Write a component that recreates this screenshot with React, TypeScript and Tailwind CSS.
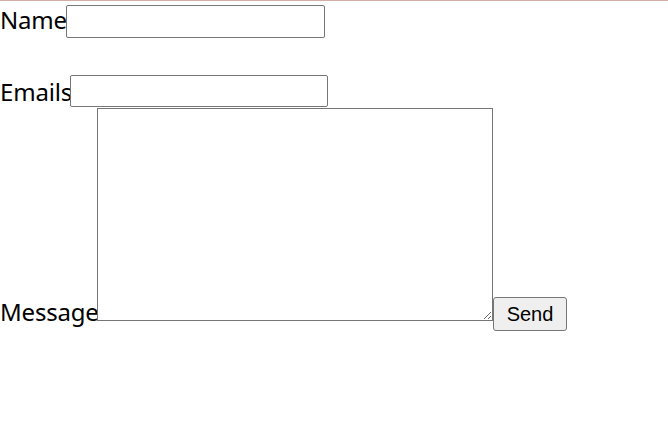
import React from "react";

export default function App() {
  return (
    <div className="w-[668px] h-[424px] bg-white border-t border-[#d2aea4] text-black font-['Noto_Sans','Open_Sans',sans-serif] text-[24px]">
      <form onSubmit={(e) => e.preventDefault()}>
        <div className="flex items-start h-[38px]">
          <label className="w-[66px] whitespace-nowrap leading-[24px] mt-[7px] tracking-[-0.2px]">Name</label>
          <input
            type="text"
            className="mt-[4px] w-[259px] h-[33px] border border-[#767676] rounded-[2px] bg-white outline-none"
          />
        </div>
        <div className="flex items-start h-[68px]">
          <label className="w-[70px] whitespace-nowrap leading-[24px] mt-[41px] tracking-[-0.2px]">Emails</label>
          <input
            type="email"
            className="mt-[36px] w-[258px] h-[32px] border border-[#767676] rounded-[2px] bg-white outline-none"
          />
        </div>
        <div className="flex items-start">
          <label className="w-[97px] whitespace-nowrap leading-[24px] mt-[193px] tracking-[-0.2px]">Message</label>
          <textarea className="mt-[1px] w-[396px] h-[213px] border border-[#767676] bg-white outline-none resize" />
          <button
            type="submit"
            className="mt-[190px] w-[74px] h-[34px] border border-[#767676] rounded-[3px] bg-[#efefef] text-[20px] leading-none font-['Liberation_Sans',Arial,sans-serif]"
          >
            Send
          </button>
        </div>
      </form>
    </div>
  );
}
